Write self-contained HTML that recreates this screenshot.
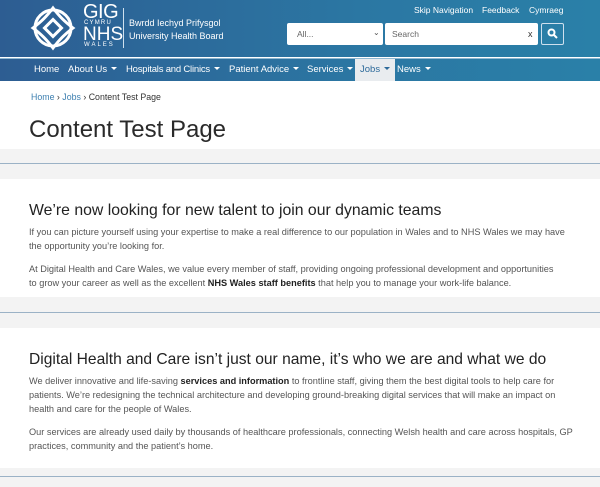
<!DOCTYPE html>
<html><head><meta charset="utf-8"><style>
*{margin:0;padding:0;box-sizing:border-box}
body{width:600px;height:487px;overflow:hidden;font-family:"Liberation Sans",sans-serif;background:#fff;color:#333;position:relative}
.hdr{position:absolute;left:0;top:0;width:600px;height:57px;background:linear-gradient(90deg,#2d5d92 0%,#2b77a3 60%,#2a80a8 100%)}
.nav{position:absolute;left:0;top:58px;width:600px;height:23px;background:linear-gradient(90deg,#2d5d92 0%,#2b77a3 60%,#2a80a8 100%);border-top:1px solid #8fb8d2}
.nav span{position:absolute;top:5px;color:#fff;font-size:9.5px}
.nav .jobs{background:#e9ecef;color:#2d6a9a;top:0;height:22px;padding:5px 5px 0}
.tri{display:inline-block;border-left:3px solid transparent;border-right:3px solid transparent;border-top:3.5px solid currentColor;margin-left:4px;vertical-align:2px}
.t{position:absolute;white-space:nowrap}
.band{position:absolute;left:0;width:600px;background:#f3f3f3}
.band i{position:absolute;left:0;right:0;height:1px;background:#9bb2c6}
p.x{position:absolute;left:29px;width:560px;font-size:9.2px;line-height:14px;color:#555;white-space:nowrap}
h2{position:absolute;left:29px;font-weight:normal;color:#222;white-space:nowrap}
b{color:#222}
</style></head><body>
<div class="hdr">
<svg style="position:absolute;left:30px;top:5px" width="46" height="46" viewBox="0 0 46 46" fill="none" stroke="#fff" stroke-width="3"><circle cx="23" cy="23" r="18"/><path d="M23 3 C30 12 34 16 43 23 C34 30 30 34 23 43 C16 34 12 30 3 23 C12 16 16 12 23 3Z"/><rect x="17" y="17" width="12" height="12" transform="rotate(45 23 23)"/></svg>
<div class="t" style="left:83px;top:2px;color:#fff;font-size:20px;letter-spacing:-0.5px;line-height:20px">GIG</div>
<div class="t" style="left:84px;top:20px;color:#fff;font-size:6px;letter-spacing:1.2px">CYMRU</div>
<div class="t" style="left:83px;top:26px;color:#fff;font-size:19px;line-height:17px">NHS</div>
<div class="t" style="left:84px;top:42px;color:#fff;font-size:6px;letter-spacing:2px">WALES</div>
<div style="position:absolute;left:123px;top:8px;width:1px;height:40px;background:#cfe0ee"></div>
<div class="t" style="left:129px;top:17px;color:#fff;font-size:9px;line-height:13px">Bwrdd Iechyd Prifysgol<br>University Health Board</div>
<div class="t" style="left:414px;top:5px;color:#fff;font-size:8.5px">Skip Navigation</div>
<div class="t" style="left:482px;top:5px;color:#fff;font-size:8.5px">Feedback</div>
<div class="t" style="left:529px;top:5px;color:#fff;font-size:8.5px">Cymraeg</div>
<div style="position:absolute;left:287px;top:23px;width:96px;height:22px;background:#fff;border-radius:2px"></div>
<div class="t" style="left:297px;top:29px;color:#666;font-size:8.5px">All...</div>
<div class="t" style="left:373px;top:28px;color:#555;font-size:8px">&#8964;</div>
<div style="position:absolute;left:385px;top:23px;width:153px;height:22px;background:#fff;border-radius:2px"></div>
<div class="t" style="left:392px;top:29px;color:#666;font-size:8.5px">Search</div>
<div class="t" style="left:528px;top:29px;color:#333;font-size:9px">x</div>
<div style="position:absolute;left:541px;top:23px;width:23px;height:22px;border:1px solid #cfe0ee;border-radius:2px"></div>
<svg style="position:absolute;left:547px;top:28px" width="11" height="11" viewBox="0 0 11 11"><circle cx="4.5" cy="4.5" r="3" fill="none" stroke="#fff" stroke-width="2"/><path d="M7 7 L10 10" stroke="#fff" stroke-width="2"/></svg>
</div>
<div class="nav">
<span style="left:34px">Home</span>
<span style="left:68px">About Us<i class="tri"></i></span>
<span style="left:126px;letter-spacing:-0.2px">Hospitals and Clinics<i class="tri"></i></span>
<span style="left:229px">Patient Advice<i class="tri"></i></span>
<span style="left:307px">Services<i class="tri"></i></span>
<span class="jobs" style="left:355px">Jobs<i class="tri"></i></span>
<span style="left:397px">News<i class="tri"></i></span>
</div>
<div class="t" style="left:31px;top:92px;font-size:8.8px;color:#333"><span style="color:#3d7fb0">Home</span> › <span style="color:#3d7fb0">Jobs</span> › Content Test Page</div>
<div class="t" style="left:29px;top:116px;font-size:24px;color:#2a2a2a">Content Test Page</div>
<div class="band" style="top:149px;height:30px"><i style="top:14px"></i></div>
<h2 style="top:202px;font-size:15.8px">We’re now looking for new talent to join our dynamic teams</h2>
<p class="x" style="top:225px">If you can picture yourself using your expertise to make a real difference to our population in Wales and to NHS Wales we may have<br>the opportunity you’re looking for.</p>
<p class="x" style="top:262px">At Digital Health and Care Wales, we value every member of staff, providing ongoing professional development and opportunities<br>to grow your career as well as the excellent <b>NHS Wales staff benefits</b> that help you to manage your work-life balance.</p>
<div class="band" style="top:297px;height:31px"><i style="top:15px"></i></div>
<h2 style="top:351px;font-size:15.6px">Digital Health and Care isn’t just our name, it’s who we are and what we do</h2>
<p class="x" style="top:374px">We deliver innovative and life-saving <b>services and information</b> to frontline staff, giving them the best digital tools to help care for<br>patients. We’re redesigning the technical architecture and developing ground-breaking digital services that will make an impact on<br>health and care for the people of Wales.</p>
<p class="x" style="top:425px">Our services are already used daily by thousands of healthcare professionals, connecting Welsh health and care across hospitals, GP<br>practices, community and the patient’s home.</p>
<div class="band" style="top:468px;height:19px"><i style="top:8px"></i></div>
</body></html>
